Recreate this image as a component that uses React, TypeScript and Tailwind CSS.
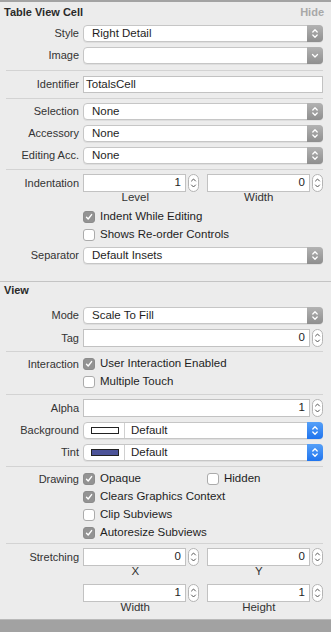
import type { ReactNode } from "react";

function Chevrons({ single = false }: { single?: boolean }) {
  if (single) {
    return (
      <svg width="8" height="6" viewBox="0 0 8 6">
        <path d="M1.5 1.5 L4 4 L6.5 1.5" fill="none" stroke="white" strokeWidth="1.3" strokeLinecap="round" strokeLinejoin="round" />
      </svg>
    );
  }
  return (
    <svg width="8" height="11" viewBox="0 0 8 11">
      <path d="M1.8 4 L4 1.8 L6.2 4" fill="none" stroke="white" strokeWidth="1.3" strokeLinecap="round" strokeLinejoin="round" />
      <path d="M1.8 7 L4 9.2 L6.2 7" fill="none" stroke="white" strokeWidth="1.3" strokeLinecap="round" strokeLinejoin="round" />
    </svg>
  );
}

function Label({ children }: { children?: ReactNode }) {
  return <div className="w-[79px] shrink-0 text-right text-[11px] text-[#333]">{children}</div>;
}

function Row({ label, children, className = "" }: { label?: string; children: ReactNode; className?: string }) {
  return (
    <div className={`flex items-center ${className}`}>
      <Label>{label}</Label>
      <div className="ml-[4px] flex flex-1 items-center">{children}</div>
    </div>
  );
}

function Popup({ value, blue = false, single = false, swatch }: { value?: string; blue?: boolean; single?: boolean; swatch?: string }) {
  return (
    <div className="flex h-[17px] flex-1 items-center rounded-[4px] border border-[#c6c6c6] bg-white shadow-[0_1px_0_rgba(0,0,0,0.06)]">
      {swatch && (
        <div className="flex h-full items-center border-r border-[#d0d0d0] pl-[7px] pr-[5px]">
          <div className={`h-[7px] w-[28px] border border-[#222] ${swatch}`} />
        </div>
      )}
      <span className={`flex-1 whitespace-nowrap text-[#1e1e1e] ${swatch ? "pl-[6px]" : "pl-[8px]"}`}>{value}</span>
      <div
        className={`-my-px -mr-px flex h-[17px] w-[16px] items-center justify-center rounded-r-[4px] ${
          blue ? "bg-gradient-to-b from-[#55a0f8] to-[#1f74ee]" : "bg-gradient-to-b from-[#b3b3b3] to-[#8e8e8e]"
        }`}
      >
        <Chevrons single={single} />
      </div>
    </div>
  );
}

function Stepper() {
  return (
    <div className="ml-[2px] flex h-[18px] w-[11px] shrink-0 flex-col items-center justify-center rounded-full border border-[#b4b4b4] bg-white">
      <svg width="7" height="12" viewBox="0 0 7 12">
        <path d="M1.5 4 L3.5 2 L5.5 4" fill="none" stroke="#555" strokeWidth="1" strokeLinecap="round" strokeLinejoin="round" />
        <path d="M1.5 8 L3.5 10 L5.5 8" fill="none" stroke="#555" strokeWidth="1" strokeLinecap="round" strokeLinejoin="round" />
      </svg>
    </div>
  );
}

function NumField({ value }: { value: string }) {
  return (
    <div className="flex flex-1 items-center">
      <div className="flex h-[18px] flex-1 items-center justify-end border border-[#c2c2c2] bg-white pr-[4px] text-[#1e1e1e]">{value}</div>
      <Stepper />
    </div>
  );
}

function Check({ checked }: { checked: boolean }) {
  return (
    <div
      className={`flex h-[12px] w-[12px] shrink-0 items-center justify-center rounded-[3px] border ${
        checked ? "border-[#8c8c8c] bg-[#939393]" : "border-[#ababab] bg-white"
      }`}
    >
      {checked && (
        <svg width="8" height="8" viewBox="0 0 8 8">
          <path d="M1.5 4.2 L3.2 6 L6.6 1.6" fill="none" stroke="white" strokeWidth="1.4" strokeLinecap="round" strokeLinejoin="round" />
        </svg>
      )}
    </div>
  );
}

function CheckItem({ checked, text }: { checked: boolean; text: string }) {
  return (
    <div className="flex items-center gap-[5px] whitespace-nowrap">
      <Check checked={checked} />
      <span className="text-[#1e1e1e]">{text}</span>
    </div>
  );
}

function CheckRow({ label, checked, text, children }: { label?: string; checked: boolean; text: string; children?: ReactNode }) {
  return (
    <div className="flex h-[18px] items-center">
      <Label>{label}</Label>
      <div className="ml-[4px] flex flex-1 items-center">
        <div className={children ? "w-[124px]" : ""}>
          <CheckItem checked={checked} text={text} />
        </div>
        {children}
      </div>
    </div>
  );
}

function Sep({ className = "" }: { className?: string }) {
  return <div className={`ml-[6px] h-px bg-[#d3d3d3] ${className}`} />;
}

function SubLabels({ a, b }: { a: string; b: string }) {
  return (
    <div className="flex h-[11px] items-center leading-none">
      <Label />
      <div className="ml-[5px] flex flex-1 gap-[8px] text-[#333]">
        <div className="flex flex-1 pr-[13px]">
          <span className="flex-1 text-center">{a}</span>
        </div>
        <div className="flex flex-1 pr-[13px]">
          <span className="flex-1 text-center">{b}</span>
        </div>
      </div>
    </div>
  );
}

export default function App() {
  return (
    <div className="flex h-[632px] w-[331px] flex-col overflow-hidden bg-[#ececec] font-['Liberation_Sans',Helvetica,sans-serif] text-[11.5px] leading-none">
      <div className="h-[2px] shrink-0 bg-[#a3a3a3]" />

      {/* Table View Cell */}
      <div className="flex h-[20px] shrink-0 items-center justify-between pl-[4px] pr-[7px] text-[11px] font-bold">
        <span className="text-[#2a2a2a]">Table View Cell</span>
        <span className="text-[#a8a8a8]">Hide</span>
      </div>

      <div className="flex flex-col pr-[8px]">
        <Row label="Style" className="mt-[3px]">
          <Popup value="Right Detail" />
        </Row>
        <Row label="Image" className="mt-[5px]">
          <Popup single />
        </Row>
        <Sep className="mt-[6px]" />
        <Row label="Identifier" className="mt-[5px]">
          <div className="flex h-[17px] flex-1 items-center border border-[#c2c2c2] bg-white pl-[2px] text-[#1e1e1e]">TotalsCell</div>
        </Row>
        <Sep className="mt-[5px]" />
        <Row label="Selection" className="mt-[4px]">
          <Popup value="None" />
        </Row>
        <Row label="Accessory" className="mt-[5px]">
          <Popup value="None" />
        </Row>
        <Row label="Editing Acc." className="mt-[5px]">
          <Popup value="None" />
        </Row>
        <Sep className="mt-[5px]" />
        <Row label="Indentation" className="mt-[4px]">
          <div className="flex flex-1 gap-[8px]">
            <NumField value="1" />
            <NumField value="0" />
          </div>
        </Row>
        <SubLabels a="Level" b="Width" />
        <div className="mt-[5px]">
          <CheckRow checked text="Indent While Editing" />
          <CheckRow checked={false} text="Shows Re-order Controls" />
        </div>
        <Row label="Separator" className="mt-[3px]">
          <Popup value="Default Insets" />
        </Row>
      </div>

      <div className="mt-[17px] h-px shrink-0 bg-[#c4c4c4]" />

      {/* View */}
      <div className="flex h-[17px] shrink-0 items-center pl-[4px] text-[11px] font-bold text-[#2a2a2a]">View</div>

      <div className="flex flex-1 flex-col pr-[8px]">
        <Row label="Mode" className="mt-[8px]">
          <Popup value="Scale To Fill" />
        </Row>
        <Row label="Tag" className="mt-[5px]">
          <NumField value="0" />
        </Row>
        <Sep className="mt-[4px]" />
        <div className="mt-[3px]">
          <CheckRow label="Interaction" checked text="User Interaction Enabled" />
          <CheckRow checked={false} text="Multiple Touch" />
        </div>
        <Sep className="mt-[3px]" />
        <Row label="Alpha" className="mt-[4px]">
          <NumField value="1" />
        </Row>
        <Row label="Background" className="mt-[5px]">
          <Popup value="Default" blue swatch="bg-white" />
        </Row>
        <Row label="Tint" className="mt-[5px]">
          <Popup value="Default" blue swatch="bg-[#4c5398]" />
        </Row>
        <Sep className="mt-[5px]" />
        <div className="mt-[3px]">
          <CheckRow label="Drawing" checked text="Opaque">
            <CheckItem checked={false} text="Hidden" />
          </CheckRow>
          <CheckRow checked text="Clears Graphics Context" />
          <CheckRow checked={false} text="Clip Subviews" />
          <CheckRow checked text="Autoresize Subviews" />
        </div>
        <Sep className="mt-[1px]" />
        <Row label="Stretching" className="mt-[4px]">
          <div className="flex flex-1 gap-[8px]">
            <NumField value="0" />
            <NumField value="0" />
          </div>
        </Row>
        <SubLabels a="X" b="Y" />
        <Row className="mt-[7px]">
          <div className="flex flex-1 gap-[8px]">
            <NumField value="1" />
            <NumField value="1" />
          </div>
        </Row>
        <SubLabels a="Width" b="Height" />
      </div>

      <div className="h-px shrink-0 bg-[#b9b9b9]" />
      <div className="h-[12px] shrink-0 bg-[#a2a2a2]" />
    </div>
  );
}
